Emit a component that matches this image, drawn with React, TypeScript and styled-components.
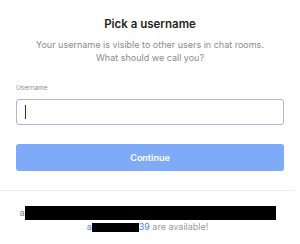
import { createGlobalStyle, styled } from "styled-components"

const Global = createGlobalStyle`
    html, body {
        margin: 0;
        padding: 0;
        background: #ffffff;
        font-family: Inter, "Liberation Sans", sans-serif;
    }
`

const Page = styled.div`
    width: 300px;
    height: 244px;
    overflow: hidden;
    background: #ffffff;
`

const Form = styled.div`
    padding: 15px 16px 0;
`

const Title = styled.h1`
    margin: 0;
    font-size: 11.5px;
    line-height: 18px;
    font-weight: 600;
    color: #1f1f1f;
    text-align: center;
`

const Subtitle = styled.p`
    margin: 6px 0 0;
    font-size: 9px;
    line-height: 12.5px;
    color: #8b8b8b;
    text-align: center;
`

const Label = styled.label`
    display: block;
    margin-top: 19px;
    font-size: 6.5px;
    line-height: 10px;
    color: #8a8a8a;
`

const Field = styled.div`
    margin-top: 6px;
    height: 26px;
    box-sizing: border-box;
    border: 1px solid #a9b4f0;
    border-radius: 3px;
    display: flex;
    align-items: center;
    padding-left: 8px;
`

const Caret = styled.span`
    width: 1px;
    height: 14px;
    background: #333333;
`

const Input = styled.input`
    flex: 1;
    min-width: 0;
    border: 0;
    outline: none;
    background: transparent;
    font: inherit;
`

const Button = styled.button`
    display: block;
    width: 100%;
    height: 27px;
    margin-top: 19px;
    border: 0;
    border-radius: 3px;
    background: #7eaaf8;
    color: #ffffff;
    font-family: Inter, "Liberation Sans", sans-serif;
    font-size: 9px;
    font-weight: 600;
`

const Divider = styled.hr`
    width: 295px;
    margin: 19px 0 0;
    border: 0;
    border-top: 1px solid #eeeeee;
`

const Suggest = styled.p`
    margin: 15px 0 0;
    padding-right: 5px;
    font-size: 9px;
    line-height: 13px;
    color: #9a9a9a;
    text-align: center;
`

const Name = styled.span`
    color: #4f84e6;
`

const Redact = styled.span<{ $w: number; $h: number; $v: number }>`
    display: inline-block;
    width: ${p => p.$w}px;
    height: ${p => p.$h}px;
    vertical-align: ${p => p.$v}px;
    background: #000000;
`

export default function App() {
    return <>
        <Global />
        <Page>
            <Form>
                <Title>Pick a username</Title>
                <Subtitle>
                    Your username is visible to other users in chat rooms.<br />
                    What should we call you?
                </Subtitle>
                <Label>Username</Label>
                <Field>
                    <Caret />
                    <Input name="username" />
                </Field>
                <Button>Continue</Button>
            </Form>
            <Divider />
            <Suggest>
                <Name>a</Name><Redact $w={251} $h={14} $v={-4} /><br />
                <Name>a</Name><Redact $w={47} $h={9} $v={-2} /><Name>39</Name> are available!
            </Suggest>
        </Page>
    </>
}
